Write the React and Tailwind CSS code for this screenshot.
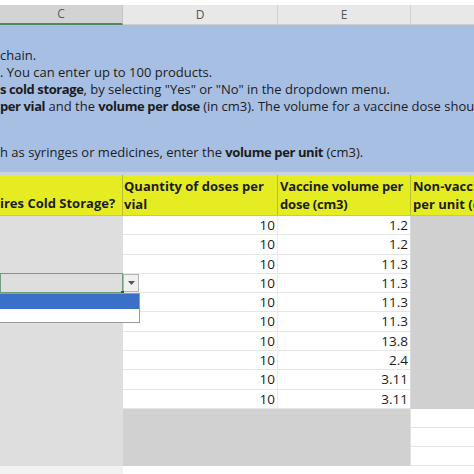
import React from "react";

const rows = [
  ["10", "1.2"],
  ["10", "1.2"],
  ["10", "11.3"],
  ["10", "11.3"],
  ["10", "11.3"],
  ["10", "11.3"],
  ["10", "13.8"],
  ["10", "2.4"],
  ["10", "3.11"],
  ["10", "3.11"],
];

export default function App() {
  const font = { fontFamily: '"Open Sans", "Liberation Sans", sans-serif' };
  return (
    <div className="w-[474px] h-[474px] overflow-hidden bg-white relative text-[#1c1c1c]" style={font}>
      <div className="h-[5px] bg-white" />
      {/* Column headers */}
      <div className="flex h-[20px] text-[12px] text-[#555]">
        <div className="w-[123px] bg-[#d3d3d3] border-b-2 border-[#4f8a62] flex items-center justify-center text-[#3e6e4e] border-r border-r-[#c4c4c4]">C</div>
        <div className="w-[155px] bg-[#e8e8e8] flex items-center justify-center border-r border-[#d0d0d0] border-b border-b-[#cfcfcf]">D</div>
        <div className="w-[133px] bg-[#e8e8e8] flex items-center justify-center border-r border-[#d0d0d0] border-b border-b-[#cfcfcf]">E</div>
        <div className="flex-1 bg-[#e8e8e8] border-b border-[#cfcfcf]" />
      </div>
      {/* Blue instructions */}
      <div className="h-[147px] bg-[#a8bfe4] text-[13px] whitespace-nowrap overflow-hidden pt-[22px] leading-[17px]">
        <div>chain.</div>
        <div>. You can enter up to 100 products.</div>
        <div>
          <b className="tracking-[-0.4px]">s cold storage</b>, by selecting "Yes" or "No" in the dropdown menu.
        </div>
        <div>
          <b className="tracking-[-0.4px]">per vial</b> and the <b className="tracking-[-0.4px]">volume per dose</b> (in cm3). The volume for a vaccine dose should
        </div>
        <div className="h-[29px]" />
        <div>
          h as syringes or medicines, enter the <b className="tracking-[-0.4px]">volume per unit</b> (cm3).
        </div>
      </div>
      <div className="h-[3px] bg-[#c9d2de]" />
      {/* Yellow header */}
      <div className="flex h-[41px] bg-[#e5ed22] text-[13px] font-bold leading-[18px] border-b border-[#c9cf3a]">
        <div className="w-[123px] border-r border-[#b8be30] flex items-end pb-[3px] whitespace-nowrap overflow-hidden">
          ires Cold Storage?
        </div>
        <div className="w-[155px] border-r border-[#b8be30] pl-[1px] pt-[2px] whitespace-nowrap overflow-hidden">
          <div>Quantity of doses per</div>
          <div>vial</div>
        </div>
        <div className="w-[133px] border-r border-[#b8be30] pl-[2px] pt-[2px] whitespace-nowrap overflow-hidden tracking-[-0.2px]">
          <div>Vaccine volume per</div>
          <div>dose (cm3)</div>
        </div>
        <div className="flex-1 pl-[2px] pt-[2px] whitespace-nowrap overflow-hidden">
          <div>Non-vaccine</div>
          <div>per unit (cm3)</div>
        </div>
      </div>
      {/* Data rows */}
      <div className="flex flex-col">
        {rows.map((r, i) => (
          <div key={i} className="flex h-[19.3px] text-[13.5px] leading-[19px]">
            <div className="w-[123px] bg-[#dedede]" />
            <div className="w-[155px] bg-white border-b border-[#e6e6e6] border-r border-r-[#ececec] text-right pr-[2px]">{r[0]}</div>
            <div className="w-[133px] bg-white border-b border-[#e6e6e6] border-r border-r-[#d8d8d8] text-right pr-[2px]">{r[1]}</div>
            <div className="flex-1 bg-[#d0d0d0]" />
          </div>
        ))}
        {[0, 1, 2].map((i) => (
          <div key={"b" + i} className="flex h-[19px]">
            <div className="w-[123px] bg-[#dedede]" />
            <div className="w-[288px] bg-[#d1d1d1] border-r border-[#e0e0e0]" />
            <div className="flex-1 bg-white border-b border-[#e4e4e4]" />
          </div>
        ))}
        <div className="flex h-[10px]">
          <div className="w-[123px] bg-[#f2f2f2]" />
          <div className="flex-1 bg-white" />
        </div>
      </div>
      {/* Dropdown overlay */}
      <div className="absolute left-0 top-[273px] w-[123px] h-[20px] border border-[#6f9e7c]" />
      <div className="absolute left-[123px] top-[274px] w-[16px] h-[18px] bg-[#f0f0f0] border border-[#b4b4b4] flex items-center justify-center">
        <svg width="7" height="4" viewBox="0 0 7 4"><path d="M0 0h7L3.5 4z" fill="#555" /></svg>
      </div>
      <div className="absolute left-[121px] top-[291px] w-[3px] h-[3px] bg-[#2f5f3f]" />
      <div className="absolute left-0 top-[293px] w-[140px] h-[30px] bg-white border border-[#9a9a9a] border-l-0 flex flex-col">
        <div className="h-[15px] bg-[#3a70c8]" />
        <div className="flex-1 bg-white" />
      </div>
    </div>
  );
}
